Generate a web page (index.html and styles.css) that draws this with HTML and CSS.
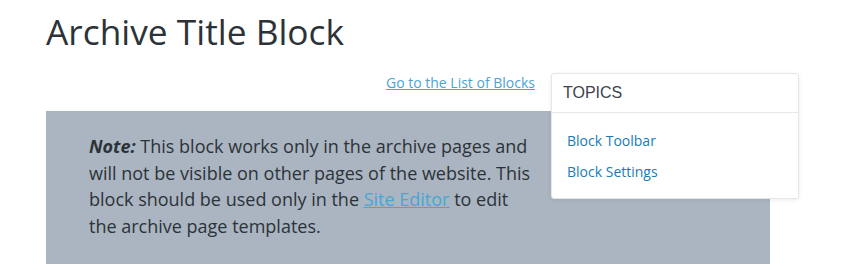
FILE: index.html
```html
<!DOCTYPE html>
<html lang="en">
<head>
<meta charset="utf-8">
<title>Archive Title Block</title>
<link rel="stylesheet" href="styles.css">
</head>
<body>
<main class="page">
  <h1 class="title">Archive Title Block</h1>
  <div class="link-row"><a class="list-link" href="#">Go to the List of Blocks</a></div>
  <section class="note">
    <p><em>Note:</em> This block works only in the archive pages and will not be visible on other pages of the website. This block should be used only in the <a class="note-link" href="#">Site Editor</a> to edit the archive page templates.</p>
  </section>
  <aside class="topics">
    <div class="topics-head">TOPICS</div>
    <ul class="topics-list">
      <li><a href="#">Block Toolbar</a></li>
      <li><a href="#">Block Settings</a></li>
    </ul>
  </aside>
</main>
</body>
</html>
```

FILE: styles.css
```css
html, body {
  margin: 0;
  padding: 0;
  background: #ffffff;
}
body {
  font-family: "Open Sans", "Noto Sans", sans-serif;
  color: #2c3338;
}
.page {
  position: relative;
  padding-left: 46px;
  width: 724px;
}
.title {
  margin: 0;
  padding-top: 7px;
  font-size: 35.3px;
  font-weight: 400;
  line-height: 49px;
  color: #2c3338;
}
.link-row {
  display: flex;
  justify-content: flex-end;
  margin-top: 17px;
  padding-right: 235px;
  line-height: 20px;
  font-size: 14px;
}
.list-link {
  color: #4aa5d3;
  text-decoration: underline;
}
.note {
  margin-top: 18px;
  background: #aab5c1;
  padding: 22px 0 24px 43px;
}
.note p {
  margin: 0;
  max-width: 450px;
  font-size: 18px;
  line-height: 26.67px;
  color: #2c3338;
}
.note em {
  font-weight: 700;
  font-style: italic;
}
.note-link {
  color: #4aa5d3;
  text-decoration: underline;
}
.topics {
  position: absolute;
  left: 551px;
  top: 73px;
  width: 246px;
  background: #ffffff;
  border: 1px solid #e6e6e6;
  border-radius: 3px;
  box-shadow: 0 1px 4px rgba(0, 0, 0, 0.08);
}
.topics-head {
  padding: 9px 11px;
  line-height: 20px;
  font-family: "Liberation Sans", Arial, sans-serif;
  font-size: 16px;
  color: #3c434a;
  border-bottom: 1px solid #e8e8e8;
}
.topics-list {
  list-style: none;
  margin: 0;
  padding: 12px 15px 11px;
}
.topics-list li {
  line-height: 31px;
  font-size: 14px;
}
.topics-list a {
  color: #1b7bb5;
  text-decoration: none;
}
```
